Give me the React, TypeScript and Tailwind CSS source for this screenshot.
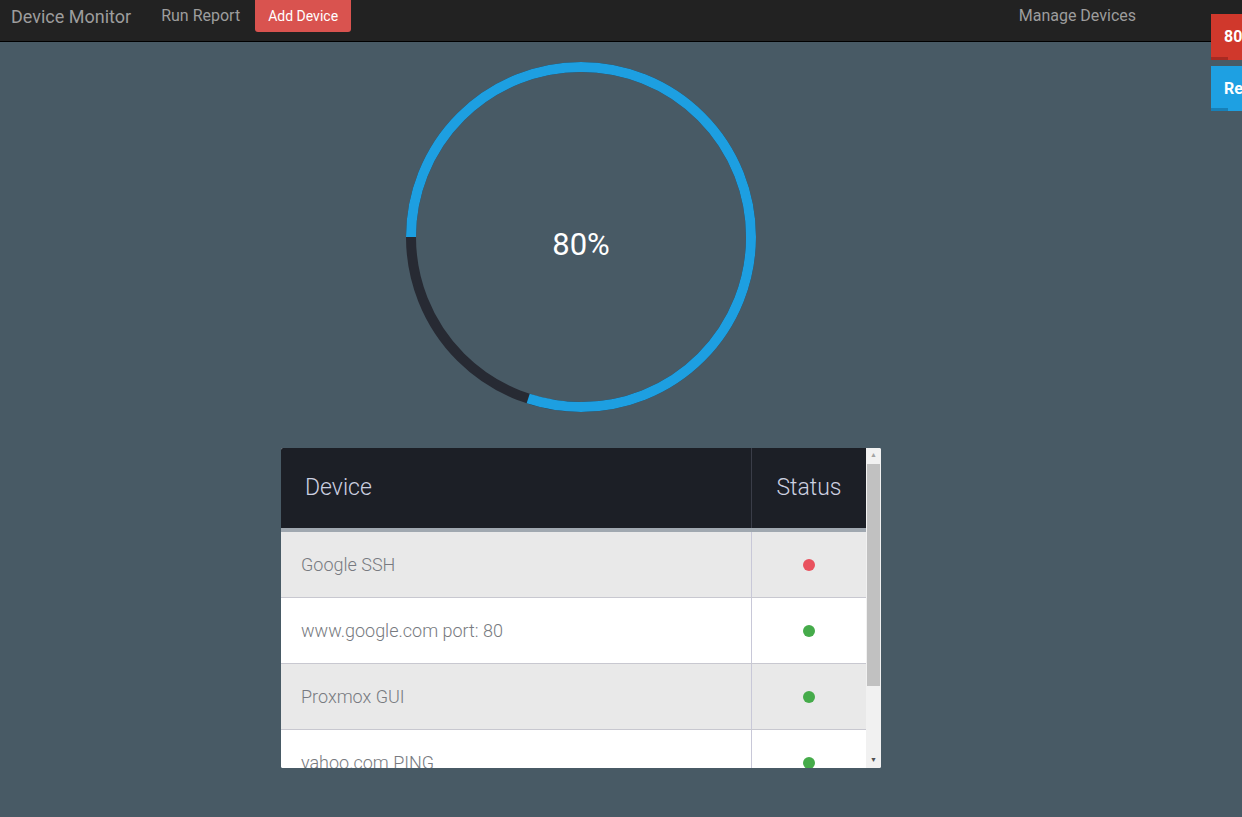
import React from "react";

const devices = [
  { name: "Google SSH", up: false },
  { name: "www.google.com port: 80", up: true },
  { name: "Proxmox GUI", up: true },
  { name: "yahoo.com PING", up: true },
  { name: "Home Router", up: true },
];

const R = 170;
const C = 2 * Math.PI * R;

export default function App() {
  return (
    <div className="relative min-h-[817px] bg-[#485a65] font-['Roboto','Liberation_Sans',sans-serif] overflow-hidden">
      <nav className="flex h-[42px] items-start border-b border-black bg-[#222222]">
        <span className="pl-[11px] pt-[3px] text-[18px] text-[#9d9d9d]">Device Monitor</span>
        <span className="pl-[30px] pt-[4px] text-[16px] text-[#9d9d9d]">Run Report</span>
        <button className="ml-[15px] h-[32px] w-[96px] rounded-b-[3px] bg-[#d9534f] text-[14px] text-white">
          Add Device
        </button>
        <span className="ml-auto mr-[106px] pt-[4px] text-[16px] text-[#9d9d9d]">Manage Devices</span>
      </nav>

      <div className="flex flex-col items-center pr-[80px]">
        <div className="relative mt-[20px] h-[350px] w-[350px]">
          <svg width="350" height="350" viewBox="0 0 350 350">
            <circle cx="175" cy="175" r={R} fill="none" stroke="#272a33" strokeWidth="10" />
            <circle
              cx="175"
              cy="175"
              r={R}
              fill="none"
              stroke="#1d9fe1"
              strokeWidth="10"
              strokeDasharray={`${C * 0.8} ${C}`}
              transform="rotate(180 175 175)"
            />
          </svg>
          <div className="absolute inset-0 flex items-center justify-center pt-[16px] text-[31px] text-white">
            80%
          </div>
        </div>

        <div className="mt-[36px] flex h-[320px] w-[600px] overflow-hidden rounded-[2px] bg-white">
          <div className="flex-1 overflow-hidden">
            <div className="flex h-[80px] items-center bg-[#1c1f26] text-[23px] font-light text-[#ccd0e0]">
              <div className="flex-1 pl-[24px]">Device</div>
              <div className="flex h-full w-[115px] items-center justify-center border-l border-[#3a3d48]">
                Status
              </div>
            </div>
            <div className="h-[4px] bg-[#a0a8b0]" />
            {devices.map((d, i) => (
              <div
                key={d.name}
                className={`flex h-[66px] border-b border-[#c8c8d0] text-[18px] font-light text-[#777a80] ${
                  i % 2 === 0 ? "bg-[#e9e9e9]" : "bg-white"
                }`}
              >
                <div className="flex flex-1 items-center pl-[20px]">{d.name}</div>
                <div className="flex w-[115px] items-center justify-center border-l border-[#c8c8d8]">
                  <div className={`h-[12px] w-[12px] rounded-full ${d.up ? "bg-[#45ab4a]" : "bg-[#e9525e]"}`} />
                </div>
              </div>
            ))}
          </div>
          <div className="flex w-[15px] flex-col bg-[#f1f1f1]">
            <div className="flex h-[15px] items-center justify-center text-[7px] leading-none text-[#a3a3a3]">▲</div>
            <div className="mx-[1px] mt-[1px] h-[222px] bg-[#c1c1c1]" />
            <div className="flex-1" />
            <div className="flex h-[15px] items-center justify-center text-[7px] leading-none text-[#505050]">▼</div>
          </div>
        </div>
      </div>

      <div className="absolute left-[1211px] top-[14px] flex h-[46px] w-[60px] items-center bg-[#d0382c] pl-[13px] text-[16px] font-bold text-white">
        80
        <div className="absolute bottom-0 left-0 h-[3px] w-[17px] bg-[#a82a22]" />
      </div>
      <div className="absolute left-[1211px] top-[66px] flex h-[45px] w-[60px] items-center bg-[#1ea0e2] pl-[13px] text-[16px] font-bold text-white">
        Re
        <div className="absolute bottom-0 left-0 h-[3px] w-[17px] bg-[#1780b8]" />
      </div>
    </div>
  );
}
